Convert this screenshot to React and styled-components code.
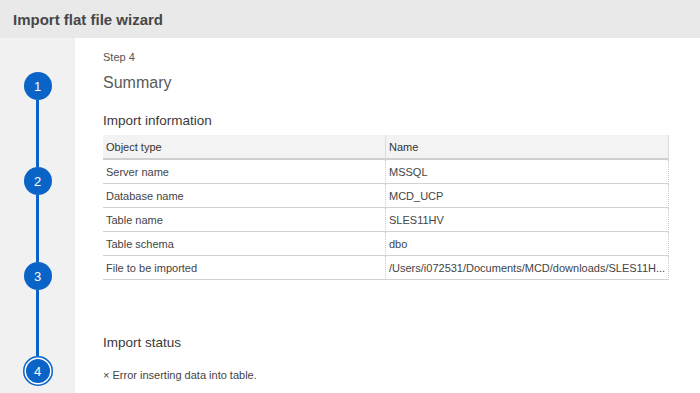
import React from "react";
import styled, { createGlobalStyle } from "styled-components";

const Global = createGlobalStyle`
  html, body { margin: 0; padding: 0; }
  body { font-family: "Liberation Sans", Arial, sans-serif; background: #fff; }
  #root { width: 700px; height: 393px; overflow: hidden; }
`;

const Page = styled.div`
  width: 700px;
  height: 393px;
  display: flex;
  flex-direction: column;
  overflow: hidden;
`;

const Header = styled.div`
  height: 38px;
  flex: none;
  background: #e9e9e9;
  display: flex;
  align-items: center;
  padding-left: 13px;
  font-size: 15px;
  font-weight: bold;
  color: #474747;
`;

const Body = styled.div`
  flex: 1;
  display: flex;
  min-height: 0;
`;

const Sidebar = styled.div`
  width: 75px;
  flex: none;
  background: #f1f1f1;
  display: flex;
  flex-direction: column;
  align-items: center;
  padding-top: 34px;
  box-sizing: border-box;
`;

const Circle = styled.div`
  width: 28px;
  height: 28px;
  flex: none;
  border-radius: 50%;
  background: #0a64c8;
  color: #fff;
  font-size: 13px;
  display: flex;
  align-items: center;
  justify-content: center;
  box-sizing: border-box;
  ${(p) =>
    p.$active &&
    `box-shadow: inset 0 0 0 1.5px #0a64c8, inset 0 0 0 3px #fff; width: 30px; height: 30px; margin: -1px 0;`}
`;

const Connector = styled.div`
  width: 3px;
  height: 67px;
  flex: none;
  background: #0a64c8;
`;

const Main = styled.div`
  flex: 1;
  padding: 12px 0 0 28px;
  color: #333;
`;

const StepLabel = styled.div`
  font-size: 11px;
  color: #555;
  height: 14px;
  line-height: 14px;
`;

const Title = styled.div`
  margin-top: 9px;
  font-size: 16px;
  color: #5a5a5a;
  height: 20px;
  line-height: 20px;
`;

const SectionTitle = styled.div`
  font-size: 13.5px;
  color: #3a3a3a;
  line-height: 16px;
  margin-top: ${(p) => p.$mt}px;
`;

const Table = styled.div`
  width: 566px;
  margin-top: 6px;
  display: grid;
  grid-template-columns: 282px 1fr;
  font-size: 11px;
  color: #444;
`;

const HeadCell = styled.div`
  background: #f3f3f3;
  height: 23px;
  border-bottom: 2px solid #cfcfcf;
  display: flex;
  align-items: center;
  padding-left: 3px;
  color: #333;
  ${(p) => p.$right && `border-left: 1px solid #dcdcdc; border-right: 1px solid #dcdcdc;`}
`;

const Cell = styled.div`
  height: 23px;
  border-bottom: 1px solid #d2d2d2;
  display: flex;
  align-items: center;
  padding-left: 3px;
  white-space: nowrap;
  overflow: hidden;
  ${(p) => p.$right && `border-left: 1px dotted #c8c8c8; border-right: 1px dotted #c8c8c8;`}
`;

const Status = styled.div`
  margin-top: 18px;
  font-size: 11px;
  color: #444;
`;

const rows = [
  ["Server name", "MSSQL"],
  ["Database name", "MCD_UCP"],
  ["Table name", "SLES11HV"],
  ["Table schema", "dbo"],
  ["File to be imported", "/Users/i072531/Documents/MCD/downloads/SLES11H..."],
];

export default function App() {
  return (
    <Page>
      <Global />
      <Header>Import flat file wizard</Header>
      <Body>
        <Sidebar>
          <Circle>1</Circle>
          <Connector />
          <Circle>2</Circle>
          <Connector />
          <Circle>3</Circle>
          <Connector />
          <Circle $active>4</Circle>
        </Sidebar>
        <Main>
          <StepLabel>Step 4</StepLabel>
          <Title>Summary</Title>
          <SectionTitle $mt={20}>Import information</SectionTitle>
          <Table>
            <HeadCell>Object type</HeadCell>
            <HeadCell $right>Name</HeadCell>
            {rows.map(([a, b]) => (
              <React.Fragment key={a}>
                <Cell>{a}</Cell>
                <Cell $right>{b}</Cell>
              </React.Fragment>
            ))}
          </Table>
          <SectionTitle $mt={55}>Import status</SectionTitle>
          <Status>× Error inserting data into table.</Status>
        </Main>
      </Body>
    </Page>
  );
}
